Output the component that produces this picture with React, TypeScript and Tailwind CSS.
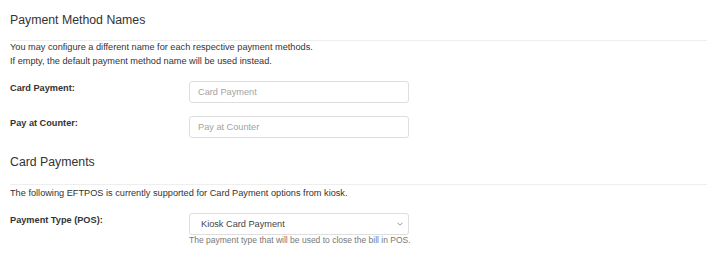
import React from 'react';

const font = { fontFamily: '"Liberation Sans", Arial, Helvetica, sans-serif' };

const Heading: React.FC<{ title: string; className?: string }> = ({ title, className }) => (
  <div className={`border-b border-[#eeeeee] text-[12.3px] leading-[15px] text-[#333333] ${className ?? ''}`}>
    {title}
  </div>
);

const TextRow: React.FC<{ label: string; placeholder: string; className?: string }> = ({
  label,
  placeholder,
  className,
}) => (
  <div className={`flex items-start ${className ?? ''}`}>
    <label className="w-[179px] shrink-0 pt-[1px] text-[9.2px] font-bold leading-[13.5px] text-[#333333]">
      {label}
    </label>
    <input
      type="text"
      placeholder={placeholder}
      className="h-[22px] w-[220px] rounded-[3px] border border-[#dedede] bg-white px-[8px] text-[9.2px] text-[#555555] placeholder:text-[#a3a3a3] outline-none"
    />
  </div>
);

export default function App() {
  return (
    <div className="min-h-[264px] w-full bg-white px-[10px]" style={font}>
      <Heading title="Payment Method Names" className="pt-[13px] pb-[12px]" />
      <div className="text-[9.2px] leading-[13.5px] text-[#333333]">
        <p>You may configure a different name for each respective payment methods.</p>
        <p>If empty, the default payment method name will be used instead.</p>
      </div>

      <TextRow label="Card Payment:" placeholder="Card Payment" className="mt-[13px]" />
      <TextRow label="Pay at Counter:" placeholder="Pay at Counter" className="mt-[13px]" />

      <Heading title="Card Payments" className="mt-[17px] pb-[14px]" />
      <p className="mt-[1.5px] text-[9.2px] leading-[13.5px] text-[#333333]">
        The following EFTPOS is currently supported for Card Payment options from kiosk.
      </p>

      <div className="mt-[12.5px] flex items-start">
        <label className="w-[179px] shrink-0 pt-[1px] text-[9.2px] font-bold leading-[13.5px] text-[#333333]">
          Payment Type (POS):
        </label>
        <div className="flex flex-col">
          <div className="relative h-[22px] w-[220px] rounded-[3px] border border-[#dedede] bg-white">
            <select
              defaultValue="kiosk"
              className="block h-[20px] w-full appearance-none bg-transparent py-0 pl-[11px] pr-[20px] text-[9.2px] leading-[20px] text-[#444444] outline-none"
            >
              <option value="kiosk">Kiosk Card Payment</option>
            </select>
            <svg
              className="pointer-events-none absolute right-[5px] top-[8.5px]"
              width="6"
              height="4"
              viewBox="0 0 6 4"
              fill="none"
            >
              <path d="M0.5 0.7 L3 3.2 L5.5 0.7" stroke="#8a8a8a" strokeWidth="0.9" />
            </svg>
          </div>
          <p className="text-[8.5px] leading-[10px] text-[#777777]">
            The payment type that will be used to close the bill in POS.
          </p>
        </div>
      </div>
    </div>
  );
}
